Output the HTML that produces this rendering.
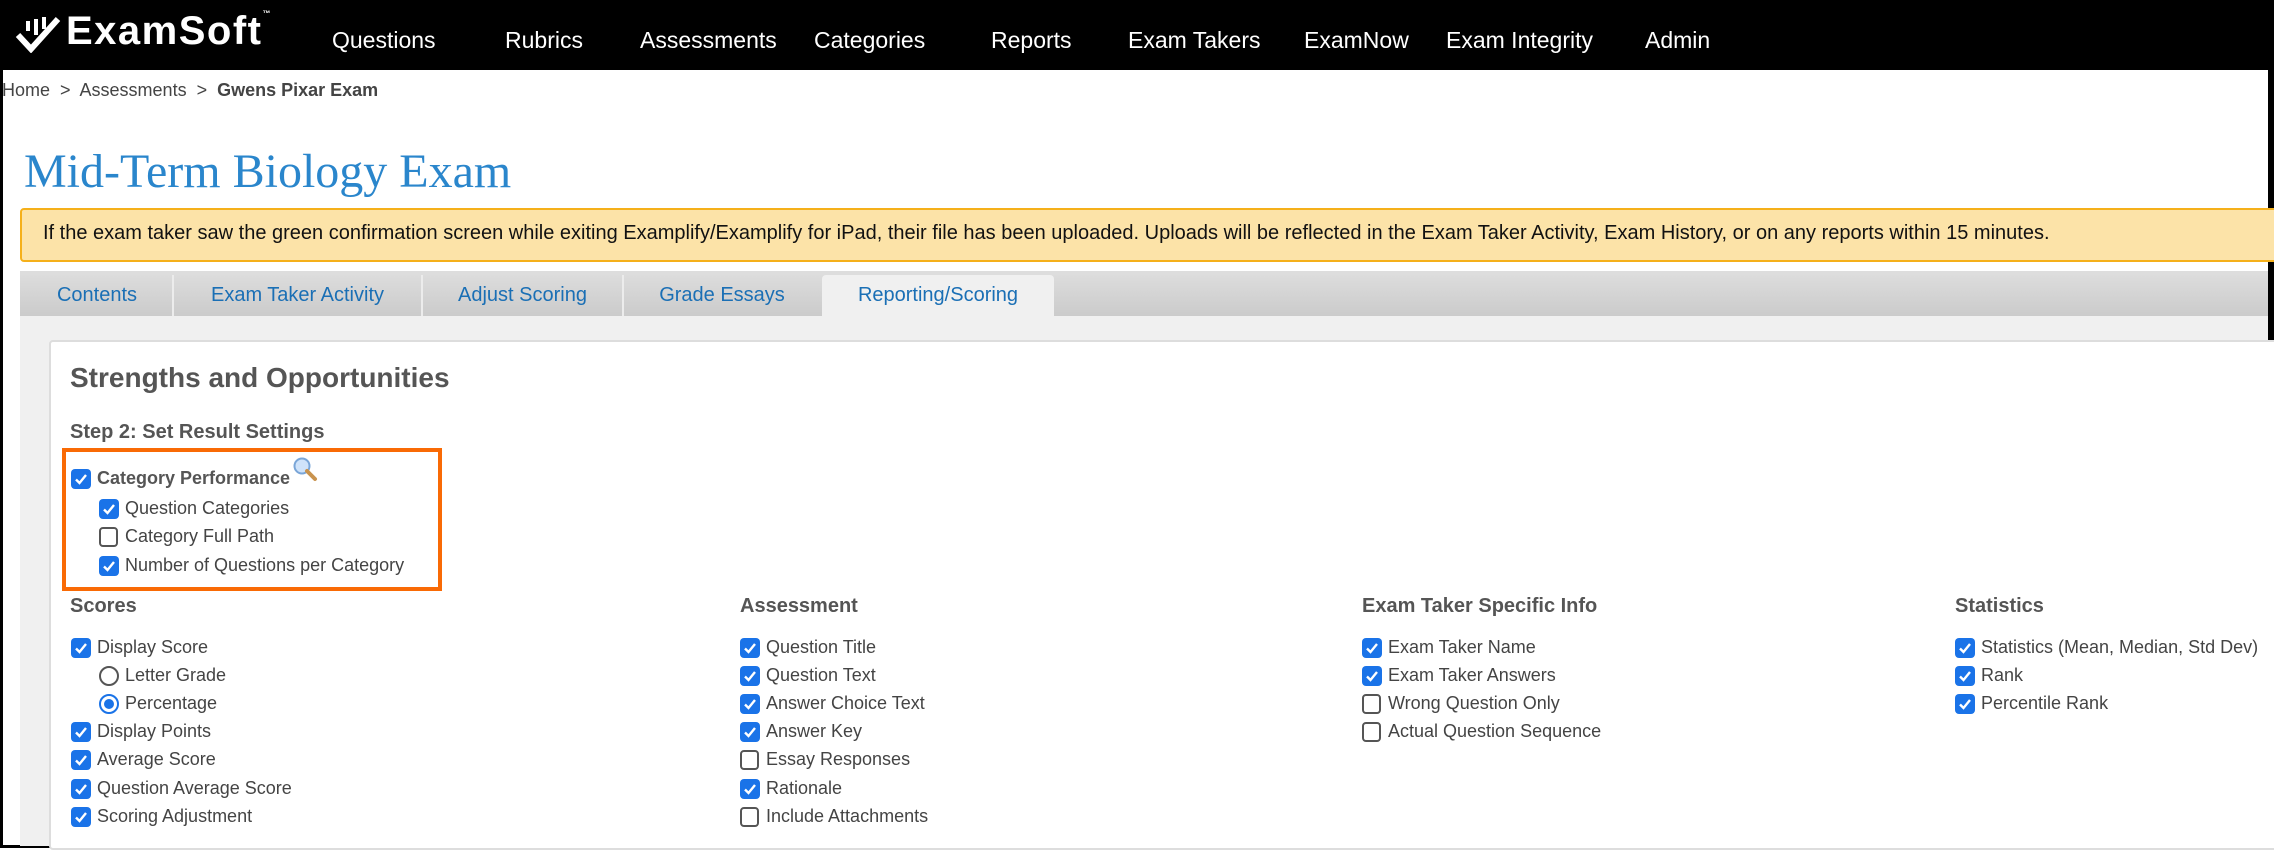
<!DOCTYPE html>
<html><head><meta charset="utf-8"><style>
*{margin:0;padding:0;box-sizing:border-box}
body{width:2274px;height:848px;overflow:hidden;background:#fff;font-family:"Liberation Sans",Arial,sans-serif;position:relative}
.a{position:absolute;white-space:nowrap}
.nav{left:0;top:0;width:2274px;height:70px;background:#000}
.ni{color:#fff;font-size:23px;top:27px}
.cb{position:absolute;width:20px;height:20px;border-radius:4px;background:#1a73e8}
.cb svg{position:absolute;left:3px;top:3px}
.ub{position:absolute;width:19px;height:20px;border-radius:4px;border:2px solid #555;background:#fff}
.rd{position:absolute;width:20px;height:20px;border-radius:50%;border:2px solid #555;background:#fff}
.rs{position:absolute;width:20px;height:20px;border-radius:50%;border:2px solid #1a73e8;background:#fff}
.rs:after{content:"";position:absolute;left:3px;top:3px;width:10px;height:10px;border-radius:50%;background:#1a73e8}
.lb{font-size:18px;color:#444}
.h{font-size:20px;font-weight:bold;color:#555}
.tab{position:absolute;top:275px;height:41px;background:linear-gradient(#dcdcdc,#cbcbcb);color:#1a6fb5;font-size:20px;text-align:center;line-height:40px}
</style></head><body>
<div class="a nav"></div>
<div class="a" style="left:0;top:0;width:3px;height:848px;background:#000"></div>
<div class="a" style="left:2268px;top:70px;width:6px;height:778px;background:#000"></div>
<div class="a" style="left:0;top:845px;width:2274px;height:3px;background:#000"></div>
<svg class="a" style="left:14px;top:15px" width="50" height="38" viewBox="0 0 50 38"><path d="M4 20 L17 34 L44 4" fill="none" stroke="#fff" stroke-width="6"/><path d="M14 16 V6 M22 20 V4 M30 14 V2" stroke="#fff" stroke-width="4"/></svg>
<div class="a" style="left:66px;top:9px;color:#fff;font-size:40px;font-weight:bold;letter-spacing:1.5px">ExamSoft<span style="font-size:8px;vertical-align:top">™</span></div>
<div class="a ni" style="left:332px">Questions</div>
<div class="a ni" style="left:505px">Rubrics</div>
<div class="a ni" style="left:640px">Assessments</div>
<div class="a ni" style="left:814px">Categories</div>
<div class="a ni" style="left:991px">Reports</div>
<div class="a ni" style="left:1128px">Exam Takers</div>
<div class="a ni" style="left:1304px">ExamNow</div>
<div class="a ni" style="left:1446px">Exam Integrity</div>
<div class="a ni" style="left:1645px">Admin</div>
<div class="a" style="left:2px;top:80px;font-size:18px;color:#444">Home &nbsp;&gt;&nbsp; Assessments &nbsp;&gt;&nbsp; <b>Gwens Pixar Exam</b></div>
<div class="a" style="left:24px;top:144px;font-family:'Liberation Serif',serif;font-size:48px;color:#2a86cc">Mid-Term Biology Exam</div>
<div class="a" style="left:20px;top:208px;width:2260px;height:54px;background:#fce3a8;border:2px solid #f5b01a;border-radius:4px"></div>
<div class="a" style="left:43px;top:222px;font-size:20px;color:#111">If the exam taker saw the green confirmation screen while exiting Examplify/Examplify for iPad, their file has been uploaded. Uploads will be reflected in the Exam Taker Activity, Exam History, or on any reports within 15 minutes.</div>
<div class="a" style="left:20px;top:271px;width:2248px;height:4px;background:#ddd"></div>
<div class="a" style="left:20px;top:275px;width:2248px;height:41px;background:linear-gradient(#dcdcdc,#cbcbcb)"></div>
<div class="tab" style="left:22px;width:150px">Contents</div>
<div class="tab" style="left:174px;width:247px">Exam Taker Activity</div>
<div class="tab" style="left:423px;width:199px">Adjust Scoring</div>
<div class="tab" style="left:624px;width:196px">Grade Essays</div>
<div class="tab" style="left:822px;width:232px;background:#f0f0f0;border-radius:4px 4px 0 0">Reporting/Scoring</div>
<div class="a" style="left:172px;top:275px;width:2px;height:41px;background:#ececec"></div>
<div class="a" style="left:421px;top:275px;width:2px;height:41px;background:#ececec"></div>
<div class="a" style="left:622px;top:275px;width:2px;height:41px;background:#ececec"></div>
<div class="a" style="left:20px;top:316px;width:2248px;height:530px;background:#f0f0f0"></div>
<div class="a" style="left:49px;top:340px;width:2230px;height:510px;background:#fff;border:2px solid #ddd;border-radius:4px"></div>
<div class="a" style="left:70px;top:362px;font-size:28px;font-weight:bold;color:#555">Strengths and Opportunities</div>
<div class="a h" style="left:70px;top:421px">Step 2: Set Result Settings</div>
<div class="a" style="left:62px;top:448px;width:380px;height:143px;border:4px solid #f96a05"></div>
<div id="items"></div>
<svg class="a" style="left:292px;top:456px" width="26" height="26" viewBox="0 0 26 26"><circle cx="10" cy="10" r="7.5" fill="#cfe3fa" stroke="#7aa6d8" stroke-width="2"/><path d="M15 15 L23 23" stroke="#c9934e" stroke-width="4" stroke-linecap="round"/></svg>
<script>
var chk='<svg width="14" height="14" viewBox="0 0 14 14"><path d="M2 7.5 L5.5 11 L12 3" fill="none" stroke="#fff" stroke-width="2.4"/></svg>';
var out='';
function it(x,y,t,txt,bold){
 var box = t=='c'?'<div class="cb" style="left:'+x+'px;top:'+(y-10)+'px">'+chk+'</div>':
   t=='u'?'<div class="ub" style="left:'+x+'px;top:'+(y-10)+'px"></div>':
   t=='r'?'<div class="rd" style="left:'+x+'px;top:'+(y-10)+'px"></div>':
   '<div class="rs" style="left:'+x+'px;top:'+(y-10)+'px"></div>';
 out+=box+'<div class="a lb" style="left:'+(x+26)+'px;top:'+(y-11)+'px;'+(bold?'font-weight:bold;color:#555':'')+'">'+txt+'</div>';
}
it(71,479,'c','Category Performance',1);
it(99,509,'c','Question Categories');
it(99,537,'u','Category Full Path');
it(99,566,'c','Number of Questions per Category');
out+='<div class="a h" style="left:70px;top:595px">Scores</div><div class="a h" style="left:740px;top:595px">Assessment</div><div class="a h" style="left:1362px;top:595px">Exam Taker Specific Info</div><div class="a h" style="left:1955px;top:595px">Statistics</div>';
var y0=648,d=28.1;
it(71,y0,'c','Display Score');it(99,y0+d,'r','Letter Grade');it(99,y0+2*d,'s','Percentage');
it(71,y0+3*d,'c','Display Points');it(71,y0+4*d,'c','Average Score');it(71,y0+5*d,'c','Question Average Score');it(71,y0+6*d,'c','Scoring Adjustment');
var A=[['c','Question Title'],['c','Question Text'],['c','Answer Choice Text'],['c','Answer Key'],['u','Essay Responses'],['c','Rationale'],['u','Include Attachments']];
A.forEach(function(a,i){it(740,y0+i*d,a[0],a[1])});
var E=[['c','Exam Taker Name'],['c','Exam Taker Answers'],['u','Wrong Question Only'],['u','Actual Question Sequence']];
E.forEach(function(a,i){it(1362,y0+i*d,a[0],a[1])});
var S=[['c','Statistics (Mean, Median, Std Dev)'],['c','Rank'],['c','Percentile Rank']];
S.forEach(function(a,i){it(1955,y0+i*d,a[0],a[1])});
document.getElementById('items').innerHTML=out;
</script>
</body></html>
